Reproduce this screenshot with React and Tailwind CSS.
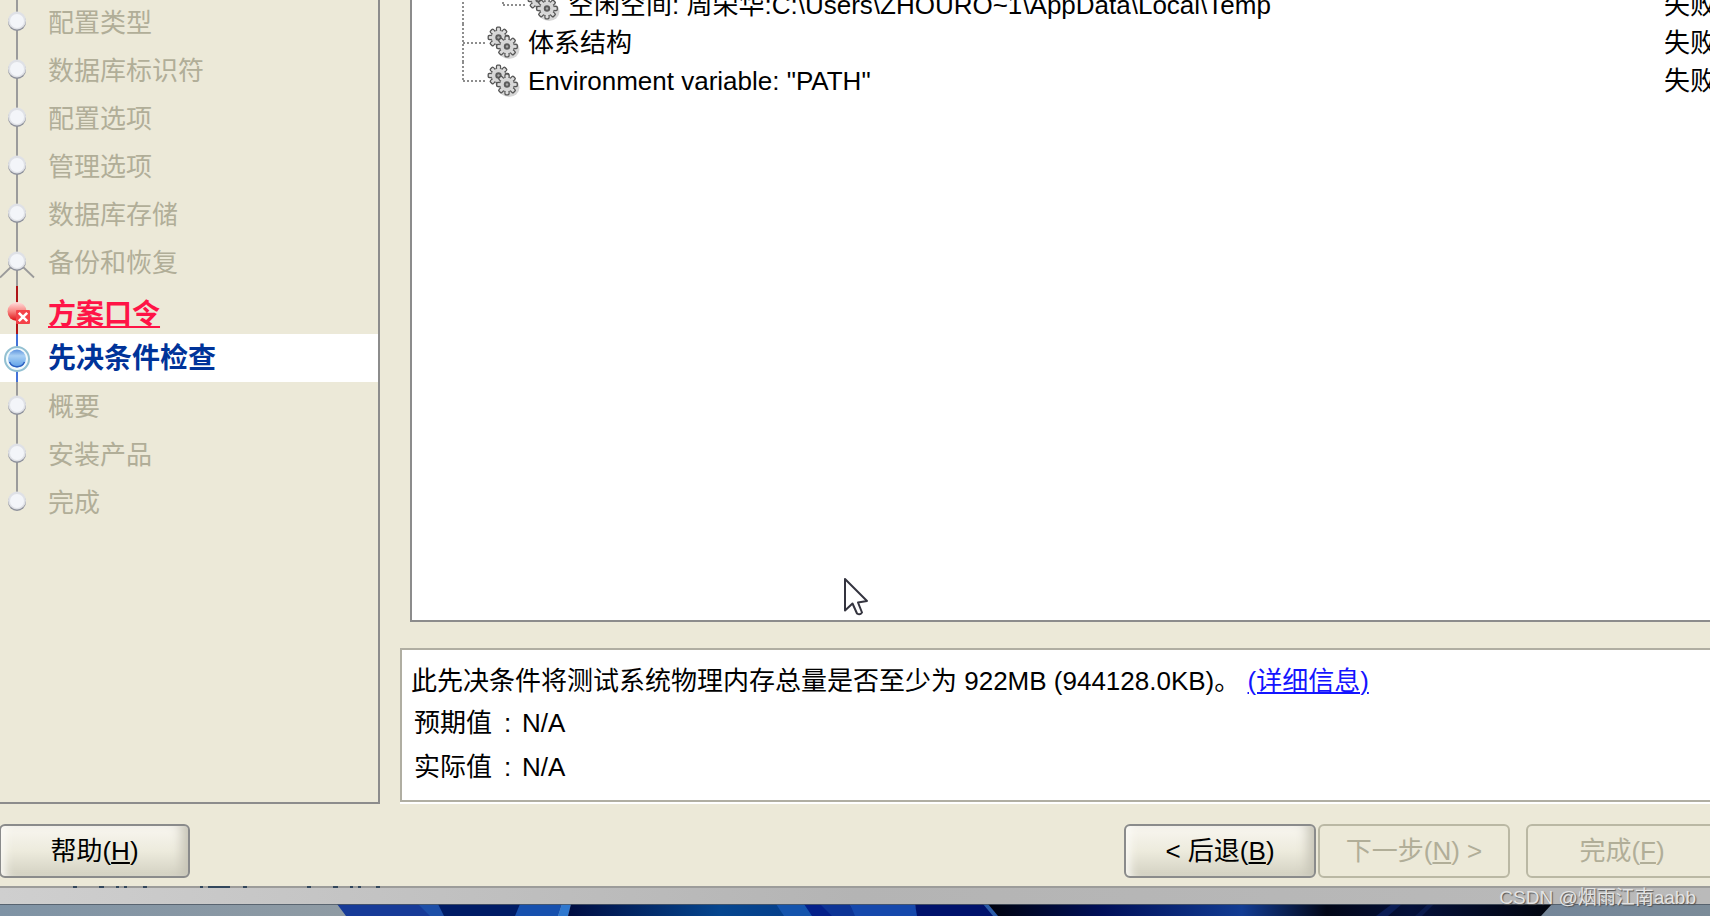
import React from "react";

const steps = [
  { label: "配置类型", state: "idle" },
  { label: "数据库标识符", state: "idle" },
  { label: "配置选项", state: "idle" },
  { label: "管理选项", state: "idle" },
  { label: "数据库存储", state: "idle" },
  { label: "备份和恢复", state: "branch" },
  { label: "方案口令", state: "error" },
  { label: "先决条件检查", state: "active" },
  { label: "概要", state: "idle" },
  { label: "安装产品", state: "idle" },
  { label: "完成", state: "last" },
];

const checks = [
  { label: "空闲空间: 周荣华:C:\\Users\\ZHOURO~1\\AppData\\Local\\Temp", depth: 2, last: false },
  { label: "体系结构", depth: 1, last: false },
  { label: 'Environment variable: "PATH"', depth: 1, last: true },
];

function StepMarker({ state }) {
  if (state === "error") {
    return (
      <svg width="36" height="48" viewBox="0 0 36 48" className="shrink-0" aria-hidden="true">
        <rect x="16" y="0" width="2" height="48" fill="#ae1417" />
        <circle cx="17" cy="25.5" r="9.5" fill="url(#redBall)" />
        <rect x="16" y="24" width="14" height="14" rx="1" fill="#f4434a" />
        <path d="M18.8 26.8l8.4 8.4M27.2 26.8l-8.4 8.4" stroke="#fff" strokeWidth="2.6" />
      </svg>
    );
  }
  if (state === "active") {
    return (
      <svg width="36" height="48" viewBox="0 0 36 48" className="shrink-0" aria-hidden="true">
        <rect x="16" y="0" width="2" height="48" fill="#4372d8" />
        <circle cx="17" cy="25" r="12" fill="#f2fafc" stroke="#93c0d2" strokeWidth="2" />
        <circle cx="17" cy="24.5" r="9" fill="url(#blueBall)" />
        <path d="M9.5 28a8.3 8.3 0 0 0 15 0" fill="none" stroke="#2c5fc0" strokeWidth="1.5" />
      </svg>
    );
  }
  return (
    <svg width="36" height="48" viewBox="0 0 36 48" className="shrink-0" aria-hidden="true">
      <rect x="16" y="0" width="2" height={state === "last" ? 24 : 48} fill="#9b9b9b" />
      {state === "branch" && (
        <path d="M0 39.5L12 28M34 39.5L22 28" stroke="#9b9b9b" strokeWidth="1.8" fill="none" />
      )}
      <circle cx="17" cy="24" r="9" fill="#8f929c" />
      <circle cx="17" cy="22.5" r="9" fill="#dfe1e6" />
      <circle cx="17" cy="23" r="7" fill="#f3f5f9" />
    </svg>
  );
}

function Step({ label, state }) {
  const textStyle =
    state === "error"
      ? "pt-2.5 text-[28px] font-bold text-[#ff1446]"
      : state === "active"
        ? "pt-0.5 text-[28px] font-bold text-[#003399]"
        : "pt-0.5 text-[26px] text-[#b1ae98]";
  return (
    <li
      className={`flex h-12 items-center gap-3 leading-8 ${state === "active" ? "bg-white" : ""}`}
      aria-current={state === "active" ? "step" : undefined}
    >
      <StepMarker state={state} />
      {state === "error" ? (
        <a href="#password" className={`underline decoration-2 underline-offset-2 ${textStyle}`}>
          {label}
        </a>
      ) : (
        <span className={textStyle}>{label}</span>
      )}
    </li>
  );
}

function Cog({ cx, cy }) {
  return (
    <g transform={`translate(${cx} ${cy})`}>
      {[0, 45, 90, 135, 180, 225, 270, 315].map((a) => (
        <rect
          key={a}
          x="-2"
          y="-10.3"
          width="4"
          height="5"
          rx="1"
          fill="#dadada"
          stroke="#555"
          strokeWidth="1.3"
          transform={`rotate(${a})`}
        />
      ))}
      <circle r="7.3" fill="#d6d6d6" stroke="#666" strokeWidth="1" />
      {[0, 45, 90, 135, 180, 225, 270, 315].map((a) => (
        <rect key={a} x="-1.3" y="-8.8" width="2.6" height="3" fill="#dcdcdc" transform={`rotate(${a})`} />
      ))}
      <circle r="3.2" fill="#5c5c5c" />
      <circle r="1.2" fill="#a8a8a8" />
    </g>
  );
}

function GearIcon() {
  return (
    <svg width="34" height="34" viewBox="0 0 34 34" className="shrink-0" aria-hidden="true">
      <ellipse cx="22" cy="23.5" rx="10.5" ry="9.5" fill="#000" opacity="0.16" />
      <Cog cx={11.5} cy={11.5} />
      <Cog cx={20} cy={20.5} />
    </svg>
  );
}

function Branch({ depth, last }) {
  const width = depth === 2 ? 115 : 75;
  const stroke = { stroke: "#8d8d8d", strokeWidth: 2, strokeDasharray: "2 2" };
  return (
    <svg width={width} height="38" viewBox={`0 0 ${width} 38`} className="shrink-0" aria-hidden="true">
      <path d={last ? "M51 0V20" : "M51 0V38"} {...stroke} />
      {depth === 2 && <path d="M91 0V20" {...stroke} />}
      <path d={`M${depth === 2 ? 91 : 51} 19H${width}`} {...stroke} />
    </svg>
  );
}

function WizardButton({ children, disabled, className = "" }) {
  const look = disabled
    ? "border-[#bab8a4] text-[#b1ae98]"
    : "border-[#8a8b8b] bg-linear-to-b from-[#f8f6f0] via-[#edebdd] to-[#d3d1c2] text-black shadow-[inset_10px_0_10px_-6px_#fbfaf6,inset_-12px_0_12px_-6px_#c6c4b6]";
  return (
    <button
      type="button"
      disabled={disabled}
      className={`h-[54px] shrink-0 rounded-md border-2 text-[26px] leading-8 whitespace-nowrap ${look} ${className}`}
    >
      {children}
    </button>
  );
}

const Key = ({ children }) => <span className="underline decoration-2 underline-offset-2">{children}</span>;

function Wallpaper() {
  return (
    <svg
      className="block h-3 w-full shrink-0"
      viewBox="0 0 1710 12"
      preserveAspectRatio="none"
      aria-hidden="true"
    >
      <rect width="1710" height="12" fill="url(#sky)" />
      <path d="M337 0H430L450 12H346Z" fill="#173b98" />
      <path d="M418 0H440L452 12H430Z" fill="#1d4fa8" />
      <path d="M438 0H522L516 12H444Z" fill="#001c66" />
      <path d="M520 0H562L558 12H515Z" fill="#1650ae" />
      <path d="M562 0H571L568 12H558Z" fill="#2f78cf" />
      <path d="M571 0H780L785 12H568Z" fill="url(#petal)" />
      <path d="M776 0H806L814 12H784Z" fill="#1454ad" />
      <path d="M804 0H822L834 12H812Z" fill="#04208a" />
      <path d="M820 0H850L857 12H832Z" fill="#0d3496" />
      <path d="M850 0H915L918 12H855Z" fill="#1548ac" />
      <path d="M915 0H985L995 12H917Z" fill="#00126c" />
      <path d="M983 0H989L999 12H993Z" fill="#2a5ba8" />
      <path d="M988 0H1552L1541 12H998Z" fill="url(#night)" />
      <path d="M1392 0H1402L1388 12H1376Z" fill="#0b1d55" />
      <path d="M1428 0H1434L1422 12H1415Z" fill="#0a1a4c" />
      <rect width="1710" height="1" fill="#4d5763" opacity="0.8" />
    </svg>
  );
}

function Gradients() {
  return (
    <svg width="0" height="0" className="absolute" aria-hidden="true">
      <defs>
        <linearGradient id="redBall" x1="0" y1="0" x2="0" y2="1">
          <stop offset="0" stopColor="#ffe1df" />
          <stop offset="0.5" stopColor="#f8837f" />
          <stop offset="1" stopColor="#dc0d12" />
        </linearGradient>
        <linearGradient id="blueBall" x1="0" y1="0" x2="0" y2="1">
          <stop offset="0" stopColor="#5d93de" />
          <stop offset="0.35" stopColor="#a9d0f4" />
          <stop offset="1" stopColor="#5b9ee8" />
        </linearGradient>
        <linearGradient id="sky">
          <stop offset="0" stopColor="#7f93a5" />
          <stop offset="0.2" stopColor="#8f9ba4" />
          <stop offset="0.9" stopColor="#748699" />
          <stop offset="1" stopColor="#7c8c99" />
        </linearGradient>
        <linearGradient id="petal">
          <stop offset="0" stopColor="#000d42" />
          <stop offset="0.7" stopColor="#05468f" />
          <stop offset="1" stopColor="#05408c" />
        </linearGradient>
        <linearGradient id="night">
          <stop offset="0" stopColor="#00030f" />
          <stop offset="0.2" stopColor="#000f58" />
          <stop offset="0.45" stopColor="#123c93" />
          <stop offset="0.6" stopColor="#020718" />
          <stop offset="0.75" stopColor="#04103a" />
          <stop offset="1" stopColor="#02060f" />
        </linearGradient>
      </defs>
    </svg>
  );
}

function Reading({ label, value }) {
  return (
    <>
      <dt className="flex gap-3">
        {label}
        <span>:</span>
      </dt>
      <dd>{value}</dd>
    </>
  );
}

export default function App() {
  return (
    <div className="relative flex h-screen min-h-[640px] flex-col overflow-hidden bg-[#ece9d8] font-['Liberation_Sans','Noto_Sans_CJK_SC',sans-serif] text-[26px] text-black">
      <Gradients />
      <div className="flex min-h-0 flex-1">
        <nav className="w-[380px] shrink-0 overflow-hidden border-r-2 border-b-2 border-[#8c8c8c]">
          <ol className="-mt-0.5">
            {steps.map((step) => (
              <Step key={step.label} {...step} />
            ))}
          </ol>
        </nav>

        <main className="flex min-w-0 flex-1 flex-col">
          <section className="relative ml-[30px] min-h-0 flex-1 overflow-hidden border-b-2 border-l-2 border-[#8c8c8c] bg-white">
            <table className="-mt-3.5 w-full table-fixed">
              <tbody>
                {checks.map((check) => (
                  <tr key={check.label} className="h-[38px] leading-8 whitespace-nowrap">
                    <td className="p-0">
                      <div className="flex h-[38px] items-center">
                        <Branch depth={check.depth} last={check.last} />
                        <GearIcon />
                        <span className="pl-[7px]">{check.label}</span>
                      </div>
                    </td>
                    <td className="w-[46px] p-0">失败</td>
                  </tr>
                ))}
              </tbody>
            </table>
            <svg
              className="absolute top-[577px] left-[431px]"
              width="27"
              height="40"
              viewBox="0 0 27 40"
              aria-hidden="true"
            >
              <path
                d="M2 2V33.5L9.5 26.5L14 36.5Q17 38.5 19 35.5L15 25.5L24 24Z"
                fill="#fff"
                stroke="#34343f"
                strokeWidth="2"
                strokeLinejoin="round"
              />
            </svg>
          </section>

          <section className="mt-[26px] ml-5 h-[156px] shrink-0 border-b-2 border-white">
            <div className="h-full border-y-2 border-l-2 border-[#b0aea2] bg-white pt-[11px] pl-[9px] leading-10 whitespace-nowrap">
              <p>
                此先决条件将测试系统物理内存总量是否至少为 922MB (944128.0KB)。{" "}
                <a href="#details" className="text-[#1414ff] underline decoration-2 underline-offset-2">
                  (详细信息)
                </a>
              </p>
              <dl className="grid grid-cols-[108px_1fr] gap-y-1 pt-0.5 pl-[3px]">
                <Reading label="预期值" value="N/A" />
                <Reading label="实际值" value="N/A" />
              </dl>
            </div>
          </section>
        </main>
      </div>

      <footer className="flex shrink-0 justify-between pt-5 pb-2">
        <WizardButton className="-ml-px w-[191px]">
          帮助(<Key>H</Key>)
        </WizardButton>
        <div className="-mr-2 flex">
          <WizardButton className="w-48">
            &lt; 后退(<Key>B</Key>)
          </WizardButton>
          <WizardButton disabled className="ml-0.5 w-48">
            下一步(<Key>N</Key>) &gt;
          </WizardButton>
          <WizardButton disabled className="ml-4 w-48">
            完成(<Key>F</Key>)
          </WizardButton>
        </div>
      </footer>

      <div className="h-[18px] shrink-0 border-t-2 border-[#9c9c9a] bg-linear-to-r from-[#cfcfcf] via-[#b4b4b4] to-[#bababa]">
        <svg width="400" height="2" viewBox="0 0 400 2" className="-mt-0.5 block" aria-hidden="true">
          <path
            d="M73 1h4M99 1h5M116 1h3M124 1h3M143 1h4M200 1h3M208 1h22M243 1h4M307 1h4M333 1h5M350 1h3M358 1h3M376 1h4"
            stroke="#33475c"
            strokeWidth="2"
          />
        </svg>
      </div>
      <Wallpaper />

      <span className="absolute right-3.5 bottom-1.5 text-[19px] leading-6 text-[#e4e4e4] [text-shadow:1px_1px_1px_#555]">
        CSDN @烟雨江南aabb
      </span>
    </div>
  );
}
